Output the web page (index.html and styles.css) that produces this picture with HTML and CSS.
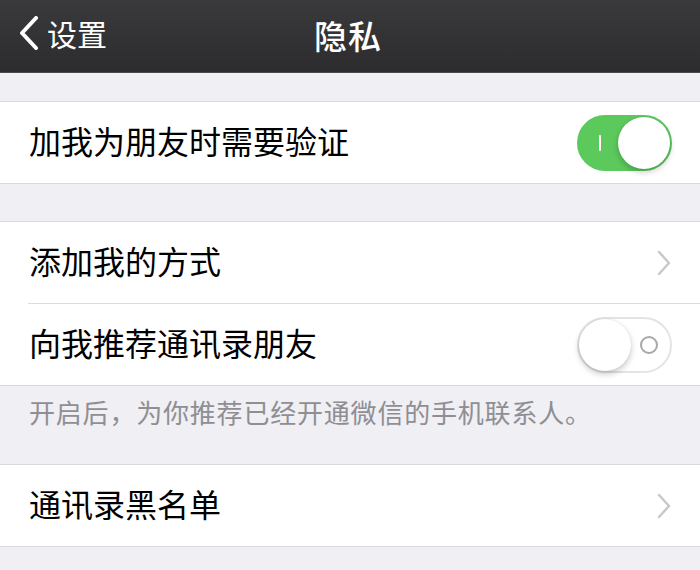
FILE: index.html
```html
<!DOCTYPE html>
<html lang="zh-CN">
<head>
  <meta charset="UTF-8">
  <title>隐私</title>
  <link rel="stylesheet" href="styles.css">
</head>
<body>

  <header class="navbar">
    <a class="back" href="#">
      <svg class="back-icon" width="20" height="34" viewBox="0 0 20 34">
        <polyline points="17,2 3,17 17,32" fill="none" stroke="#fff" stroke-width="4" stroke-linecap="round" stroke-linejoin="round"/>
      </svg>
      <span>设置</span>
    </a>
    <h1>隐私</h1>
  </header>

  <main class="settings">

    <section class="group first">
      <div class="cell">
        <span class="cell-title">加我为朋友时需要验证</span>
        <span class="switch on"><span class="mark"></span><span class="knob"></span></span>
      </div>
    </section>

    <section class="group">
      <div class="cell">
        <span class="cell-title">添加我的方式</span>
        <svg class="chevron" width="14" height="26" viewBox="0 0 14 26">
          <polyline points="2,2 12,13 2,24" fill="none" stroke="#c7c7cc" stroke-width="2.4" stroke-linecap="round" stroke-linejoin="round"/>
        </svg>
      </div>
      <div class="cell">
        <span class="cell-title">向我推荐通讯录朋友</span>
        <span class="switch"><span class="knob"></span><span class="mark"></span></span>
      </div>
    </section>
    <p class="group-note">开启后，为你推荐已经开通微信的手机联系人。</p>

    <section class="group">
      <div class="cell">
        <span class="cell-title">通讯录黑名单</span>
        <svg class="chevron" width="14" height="26" viewBox="0 0 14 26">
          <polyline points="2,2 12,13 2,24" fill="none" stroke="#c7c7cc" stroke-width="2.4" stroke-linecap="round" stroke-linejoin="round"/>
        </svg>
      </div>
    </section>

  </main>

</body>
</html>
```

FILE: styles.css
```css
body {
  margin: 0;
  background-color: #efeff4;
  font-family: "Noto Sans CJK SC", "Noto Sans", sans-serif;
  color: #000;
}

/* Üst bar */
.navbar {
  height: 73px;
  background: linear-gradient(to bottom, #3a3a3c, #2c2c2e);
  border-bottom: 1px solid #4a4a4c;
  box-sizing: border-box;
  display: flex;
  align-items: center;
  justify-content: center;
  position: relative;
  color: #fff;
}

.navbar h1 {
  margin: -3px 0 0 -4px;
  font-size: 33px;
  font-weight: 500;
  letter-spacing: 1px;
}

.back {
  position: absolute;
  left: 19px;
  top: 15px;
  display: flex;
  align-items: center;
  gap: 8px;
  color: #fff;
  text-decoration: none;
  font-size: 30px;
  line-height: 36px;
}

/* Listeler */
.group {
  background: #fff;
  border-top: 1px solid #d9d9de;
  border-bottom: 1px solid #d9d9de;
  margin-top: 37px;
}

.group.first {
  margin-top: 28px;
}

.cell {
  height: 81px;
  margin-left: 28px;
  padding: 0 28px 0 1px;
  display: flex;
  align-items: center;
  justify-content: space-between;
}

.cell + .cell {
  border-top: 1px solid #dcdce0;
}

.cell-title {
  font-size: 32px;
  line-height: 40px;
  margin-top: -5px;
}

.chevron {
  margin-right: 1px;
}

.group-note {
  margin: 0 0 -37px;
  height: 78px;
  padding: 7px 0 0 29px;
  box-sizing: border-box;
  font-size: 26px;
  letter-spacing: 0.8px;
  color: #8e8e93;
}

/* Anahtarlar */
.switch {
  width: 95px;
  height: 56px;
  border-radius: 28px;
  box-sizing: border-box;
  display: flex;
  align-items: center;
  justify-content: space-between;
  background: #fff;
  border: 2px solid #e4e4e8;
}

.switch.on {
  background: #5cc95d;
  border-color: #5cc95d;
}

.knob {
  width: 52px;
  height: 52px;
  border-radius: 50%;
  background: #fff;
  box-shadow: 0 3px 6px rgba(0, 0, 0, 0.22), 0 0 1px rgba(0, 0, 0, 0.15);
}

.switch .mark {
  width: 14px;
  height: 14px;
  border: 2px solid #a8a8ac;
  border-radius: 50%;
  margin-right: 12px;
}

.switch.on .mark {
  width: 2px;
  height: 16px;
  border: none;
  border-radius: 1px;
  background: #fff;
  margin: 0 0 0 20px;
}
```
